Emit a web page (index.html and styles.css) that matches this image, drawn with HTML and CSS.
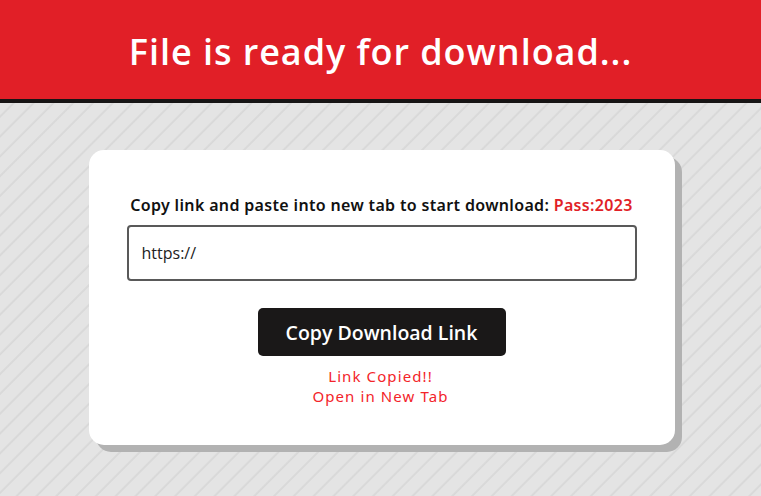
FILE: index.html
```html
<!DOCTYPE html>
<html>
<head>
<meta charset="utf-8">
<link rel="stylesheet" href="styles.css">
</head>
<body>
<header class="topbar">
  <h1 class="title">File is ready for download...</h1>
</header>
<main class="stage">
  <section class="card">
    <p class="label">Copy link and paste into new tab to start download: <span class="pass">Pass:2023</span></p>
    <div class="field">https://</div>
    <button class="copy-btn">Copy Download Link</button>
    <div class="msg">
      <div>Link Copied!!</div>
      <div>Open in New Tab</div>
    </div>
  </section>
</main>
</body>
</html>
```
FILE: styles.css
```css
html, body {
  margin: 0;
  padding: 0;
}
body {
  width: 761px;
  height: 496px;
  overflow: hidden;
  font-family: "Open Sans", "Noto Sans", sans-serif;
  background-color: #e4e4e4;
  background-image: repeating-linear-gradient(135deg, #e4e4e4 0px, #e4e4e4 11px, #dadada 12px, #d8d8d8 13px, #e4e4e4 14px);
}
.topbar {
  height: 99px;
  background: #e11f27;
  border-bottom: 4px solid #171515;
  display: flex;
  align-items: center;
  justify-content: center;
}
.title {
  margin: 0;
  color: #fff;
  font-family: "Open Sans", sans-serif;
  font-weight: 600;
  font-size: 36px;
  letter-spacing: 0.95px;
  padding-top: 4px;
}
.stage {
  display: flex;
  justify-content: center;
  padding-top: 47px;
  padding-left: 2px;
}
.card {
  height: 295px;
  box-sizing: border-box;
  width: 586px;
  padding: 45px 38px 0;
  background: #fff;
  border-radius: 15px;
  box-shadow: 7px 7px 0 #b2b2b2;
  display: flex;
  flex-direction: column;
  align-items: center;
}
.label {
  margin: 0;
  font-family: "Noto Sans", sans-serif;
  font-size: 16px;
  line-height: 20px;
  font-weight: 600;
  color: #111;
  letter-spacing: 0.34px;
  white-space: nowrap;
}
.pass {
  color: #e11f27;
}
.field {
  margin-top: 10px;
  box-sizing: border-box;
  width: 510px;
  height: 56px;
  border: 2px solid #595959;
  border-radius: 4px;
  padding: 0 13px;
  display: flex;
  align-items: center;
  font-size: 16px;
  color: #222;
}
.copy-btn {
  margin-top: 27px;
  width: 248px;
  height: 48px;
  border: 0;
  border-radius: 5px;
  background: #1a1818;
  color: #fff;
  font-family: "Open Sans", sans-serif;
  font-weight: 600;
  font-size: 19.5px;
  padding: 0;
}
.msg {
  margin-top: 10px;
  padding-right: 2px;
  text-align: center;
  color: #f3242a;
  font-size: 15px;
  line-height: 20px;
  letter-spacing: 1.1px;
  font-family: "Noto Sans", sans-serif;
  font-weight: 400;
}
```
